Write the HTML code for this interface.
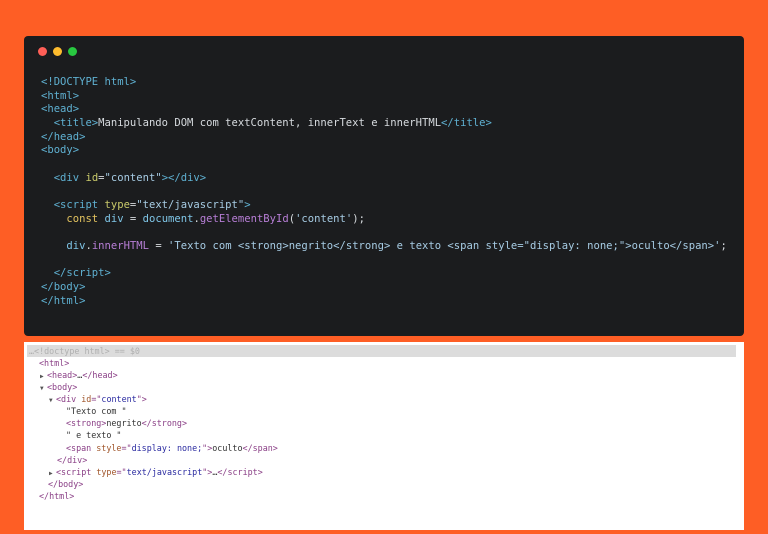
<!DOCTYPE html>
<html><head><style>
body{margin:0;width:768px;height:534px;background:#fe5e25;position:relative;overflow:hidden;font-family:"DejaVu Sans Mono","Liberation Mono",monospace}
.dark{position:absolute;left:24px;top:36px;width:720px;height:300px;background:#1b1c1e;border-radius:4px}
.dot{position:absolute;top:47px;width:9px;height:9px;border-radius:50%}
pre{margin:0;position:absolute;font-family:inherit}
.code{left:41px;top:76px;font-size:10.55px;line-height:13.65px;color:#d6dade}
.t{color:#5fb0d1}.a{color:#c9c96a}.s{color:#a6cbe3}.k{color:#e3c35f}.p{color:#b77ed6}.v{color:#7fc5e6}
.white{position:absolute;left:24px;top:342px;width:720px;height:188px;background:#fff}
.bar{position:absolute;left:27px;top:345px;width:709px;height:12px;background:#dcdcdc}
.l{position:absolute;font-size:8.4px;line-height:12px;color:#333;white-space:pre;height:12px}
.g{color:#b0b0b0}.dt{color:#8a3f86}.da{color:#a0552a}.dv{color:#2a2aa0}.dk{color:#444}
.tri{color:#555;font-size:6px;display:inline-block;width:7px}
</style></head><body>
<div class="dark"></div>
<div class="dot" style="left:38px;background:#ff5f57"></div>
<div class="dot" style="left:53px;background:#febc2e"></div>
<div class="dot" style="left:68px;background:#28c840"></div>
<pre class="code"><span class="t">&lt;!DOCTYPE html&gt;</span>
<span class="t">&lt;html&gt;</span>
<span class="t">&lt;head&gt;</span>
  <span class="t">&lt;title&gt;</span>Manipulando DOM com textContent, innerText e innerHTML<span class="t">&lt;/title&gt;</span>
<span class="t">&lt;/head&gt;</span>
<span class="t">&lt;body&gt;</span>

  <span class="t">&lt;div</span> <span class="a">id</span>=<span class="s">"content"</span><span class="t">&gt;&lt;/div&gt;</span>

  <span class="t">&lt;script</span> <span class="a">type</span>=<span class="s">"text/javascript"</span><span class="t">&gt;</span>
    <span class="k">const</span> <span class="v">div</span> = <span class="v">document</span>.<span class="p">getElementById</span>(<span class="s">'content'</span>);

    <span class="v">div</span>.<span class="p">innerHTML</span> = <span class="s">'Texto com &lt;strong&gt;negrito&lt;/strong&gt; e texto &lt;span style="display: none;"&gt;oculto&lt;/span&gt;'</span>;

  <span class="t">&lt;/script&gt;</span>
<span class="t">&lt;/body&gt;</span>
<span class="t">&lt;/html&gt;</span></pre>
<div class="white"></div>
<div class="bar"></div>
<div class="l" style="left:29px;top:345px"><span class="g">…&lt;!doctype html&gt;</span> <span class="g">== $0</span></div>
<div class="l" style="left:39px;top:357px"><span class="dt">&lt;html&gt;</span></div>
<div class="l" style="left:40px;top:369px"><span class="tri">▶</span><span class="dt">&lt;head&gt;</span>…<span class="dt">&lt;/head&gt;</span></div>
<div class="l" style="left:40px;top:381px"><span class="tri">▼</span><span class="dt">&lt;body&gt;</span></div>
<div class="l" style="left:49px;top:393px"><span class="tri">▼</span><span class="dt">&lt;div</span> <span class="da">id</span><span class="dt">="</span><span class="dv">content</span><span class="dt">"&gt;</span></div>
<div class="l" style="left:66px;top:405px">"Texto com "</div>
<div class="l" style="left:66px;top:417px"><span class="dt">&lt;strong&gt;</span>negrito<span class="dt">&lt;/strong&gt;</span></div>
<div class="l" style="left:66px;top:429px">" e texto "</div>
<div class="l" style="left:66px;top:442px"><span class="dt">&lt;span</span> <span class="da">style</span><span class="dt">="</span><span class="dv">display: none;</span><span class="dt">"&gt;</span>oculto<span class="dt">&lt;/span&gt;</span></div>
<div class="l" style="left:57px;top:454px"><span class="dt">&lt;/div&gt;</span></div>
<div class="l" style="left:49px;top:466px"><span class="tri">▶</span><span class="dt">&lt;script</span> <span class="da">type</span><span class="dt">="</span><span class="dv">text/javascript</span><span class="dt">"&gt;</span>…<span class="dt">&lt;/script&gt;</span></div>
<div class="l" style="left:48px;top:478px"><span class="dt">&lt;/body&gt;</span></div>
<div class="l" style="left:39px;top:490px"><span class="dt">&lt;/html&gt;</span></div>
</body></html>
